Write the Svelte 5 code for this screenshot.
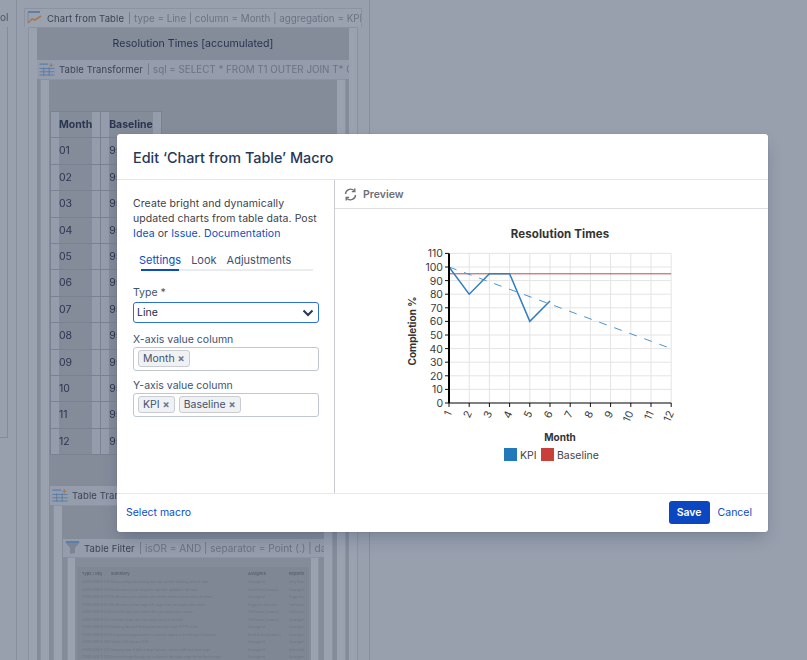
<script>
  const rows = ['01', '02', '03', '04', '05', '06', '07', '08', '09', '10', '11', '12'];

  const issues = [
    ['CONFLUENCE-1241', 'Macro configuration dialog does not save the Opening value of chart', 'Unassigned', 'Greg Harris'],
    ['CONFLUENCE-1242', 'Notifications: email integration has been updated to the latest', 'Cara Perkin [Inactive]', 'Unassigned'],
    ['CONFLUENCE-1237', 'Notifications: user updates with mobile interface optimised to the latest', 'Unassigned', 'Peggy Fox'],
    ['CONFLUENCE-1233', 'Notifications: Create page with pages from new application server', 'Peggy Fox [Inactive]', 'Ted Francis'],
    ['CONFLUENCE-1232', 'Ten fields light with content after you start to use a macro', 'Ted Francis [Inactive]', 'Ted Francis'],
    ['CONFLUENCE-1231', 'Annotate image selection using macros in the table', 'Ted Francis [Inactive]', 'Unassigned'],
    ['CONFLUENCE-1224', 'Updating data and filtering data not work on an HTTPS server', 'Unassigned', 'Unassigned'],
    ['CONFLUENCE-1223', 'Fix layout during parameters comments appear in the left panel of preview', 'Derek Burton [Inactive]', 'Unassigned'],
    ['CONFLUENCE-1218', 'Update CSS format in SVG', 'Unassigned', 'Unassigned'],
    ['CONFLUENCE-1212', 'Mapping input of field of large features, column width and input range', 'Unassigned', 'Unfinished'],
    ['CONFLUENCE-1204', 'Incorrect image through text is shown in the output page the text for the page', 'Unassigned', 'Unassigned']
  ];

  const plotLeft = 49;
  const plotBottom = 183;
  const stepX = 20.2;
  const stepY = 1.36;
  const px = (m) => plotLeft + (m - 1) * stepX;
  const py = (v) => plotBottom - v * stepY;

  const months = [1, 2, 3, 4, 5, 6, 7, 8, 9, 10, 11, 12];
  const ticks = [0, 10, 20, 30, 40, 50, 60, 70, 80, 90, 100, 110];
  const kpi = [100, 80, 95, 95, 60, 75];
  const kpiPoints = kpi.map((v, i) => `${px(i + 1)},${py(v)}`).join(' ');
</script>

<div class="page">
  <div class="side"><span class="side-text">ol</span><div class="side-body"></div></div>
  <div class="column">
    <div class="macro chart-macro">
      <div class="macro-head">
        <svg class="mi" width="16" height="14" viewBox="0 0 16 14">
          <path d="M1 1h12" stroke="#5c7fa8" stroke-width="2" />
          <path d="M1 12l4-4 3 1 6-4" stroke="#a8784e" stroke-width="1.6" fill="none" />
          <path d="M1 1v11" stroke="#7d8899" />
        </svg>
        <b>Chart from Table</b><span>| type = Line | column = Month | aggregation = KPI | tfoot = true</span>
      </div>
      <div class="macro-body">
        <div class="fill">
          <div class="chart-title">Resolution Times [accumulated]</div>
          <div class="macro transformer">
            <div class="macro-head">
              <svg class="mi" width="16" height="13" viewBox="0 0 14 12">
                <path d="M0 1h8M0 5h14M0 8h14M0 11h14M4 4v8M9 4v8" stroke="#5c7fa8" />
                <path d="M11 0v4M9 2h4" stroke="#a8784e" />
              </svg>
              <b>Table Transformer</b><span>| sql = SELECT * FROM T1 OUTER JOIN T* ON T1.'Month' = T*.'Month'</span>
            </div>
            <div class="macro-body">
              <div class="fill table-fill">
                <table>
                  <thead>
                    <tr><th><i>Month</i></th><th><i>Baseline</i></th></tr>
                  </thead>
                  <tbody>
                    {#each rows as r}
                      <tr><td><i>{r}</i></td><td><i>95</i></td></tr>
                    {/each}
                  </tbody>
                </table>
                <div class="macro second">
                  <div class="macro-head">
                    <svg class="mi" width="16" height="13" viewBox="0 0 14 12">
                      <path d="M0 1h8M0 5h14M0 8h14M0 11h14M4 4v8M9 4v8" stroke="#5c7fa8" />
                      <path d="M11 0v4M9 2h4" stroke="#a8784e" />
                    </svg>
                    <b>Table Transformer</b>
                  </div>
                  <div class="macro-body">
                    <div class="fill filter-fill">
                      <div class="macro third">
                        <div class="macro-head">
                          <svg class="mi" width="15" height="14" viewBox="0 0 15 14">
                            <path d="M0 1h15l-5 6v5l-5 1V7z" fill="#7d8592" />
                            <path d="M1 1h13" stroke="#5c7fa8" stroke-width="2" />
                          </svg>
                          <b>Table Filter</b><span>| isOR = AND | separator = Point (.) | datepattern = dd.mm.yy</span>
                        </div>
                        <div class="macro-body">
                          <div class="fill issues-fill">
                            <div class="issues">
                              <div class="issue issue-head"><span>Type / Key</span><span>Summary</span><span>Assignee</span><span>Reporter</span></div>
                              {#each issues as row}
                                <div class="issue">
                                  {#each row as cell}<span>{cell}</span>{/each}
                                </div>
                              {/each}
                            </div>
                          </div>
                        </div>
                      </div>
                    </div>
                  </div>
                </div>
              </div>
            </div>
          </div>
        </div>
      </div>
    </div>
  </div>

  <div class="modal">
    <header class="modal-head">Edit ‘Chart from Table’ Macro</header>
    <div class="modal-main">
      <aside class="panel">
        <p class="intro">
          Create bright and dynamically updated charts from table data. Post
          <a href="#idea">Idea</a> or <a href="#issue">Issue</a>. <a href="#docs">Documentation</a>
        </p>
        <nav class="tabs">
          <span class="tab active">Settings</span>
          <span class="tab">Look</span>
          <span class="tab">Adjustments</span>
        </nav>
        <label class="field-label" for="type">Type *</label>
        <div class="select" id="type">
          <span>Line</span>
          <svg width="12" height="8" viewBox="0 0 12 8"><path d="M1.5 1.5L6 6l4.5-4.5" fill="none" stroke="#253858" stroke-width="2" /></svg>
        </div>
        <div class="field-label">X-axis value column</div>
        <div class="multi">
          <span class="chip">Month <em>×</em></span>
        </div>
        <div class="field-label">Y-axis value column</div>
        <div class="multi">
          <span class="chip">KPI <em>×</em></span>
          <span class="chip">Baseline <em>×</em></span>
        </div>
      </aside>
      <section class="preview">
        <div class="preview-head">
          <svg width="13" height="13" viewBox="0 0 13 13" fill="none" stroke="#6b6f76" stroke-width="1.4">
            <path d="M1.5 6A5 5 0 0 1 10 2.6" />
            <path d="M11.5 7A5 5 0 0 1 3 10.4" />
            <path d="M10.8 0.6v3h-3" />
            <path d="M2.2 12.4v-3h3" />
          </svg>
          <span>Preview</span>
        </div>
        <div class="chart-wrap">
          <svg class="chart" width="300" height="250" viewBox="0 0 300 250">
            <text class="c-title" x="160" y="18" text-anchor="middle">Resolution Times</text>
            {#each ticks as t}
              {#if t > 0}<line x1={plotLeft} x2="271.2" y1={py(t)} y2={py(t)} class="grid" />{/if}
              <text class="tick" x={plotLeft - 6} y={py(t) + 4} text-anchor="end">{t}</text>
              <line x1={plotLeft - 4} x2={plotLeft} y1={py(t)} y2={py(t)} class="axis" />
            {/each}
            {#each months as m}
              {#if m > 1}<line x1={px(m)} x2={px(m)} y1={py(110)} y2={plotBottom} class="grid" />{/if}
              <line x1={px(m)} x2={px(m)} y1={plotBottom} y2={plotBottom + 4} class="axis" />
              <text class="tick" transform="translate({px(m) + 3} {plotBottom + 10}) rotate(-65)" text-anchor="end">{m}</text>
            {/each}
            <line x1={plotLeft} x2={px(12)} y1={py(95)} y2={py(95)} class="baseline" />
            <line x1={plotLeft} x2={px(12)} y1={py(100)} y2={py(40)} class="trend" />
            <polyline points={kpiPoints} class="kpi" />
            <line x1={plotLeft} x2={plotLeft} y1={py(110)} y2={plotBottom} class="axis-y" />
            <line x1={plotLeft} x2={px(12)} y1={plotBottom} y2={plotBottom} class="axis-x" />
            <text class="c-label" transform="translate(16 111) rotate(-90)" text-anchor="middle">Completion %</text>
            <text class="c-label" x="160" y="221" text-anchor="middle">Month</text>
            <rect x="104" y="228" width="13" height="13" fill="#2178bb" />
            <text class="legend" x="120" y="239">KPI</text>
            <rect x="141" y="228" width="13" height="13" fill="#c9403a" />
            <text class="legend" x="157" y="239">Baseline</text>
          </svg>
        </div>
      </section>
    </div>
    <footer class="modal-foot">
      <a href="#select">Select macro</a>
      <div class="actions">
        <button class="save">Save</button>
        <a href="#cancel">Cancel</a>
      </div>
    </footer>
  </div>
</div>

<style>
  :global(body) {
    margin: 0;
    overflow: hidden;
  }

  .page {
    position: relative;
    display: flex;
    width: 807px;
    height: 660px;
    overflow: hidden;
    background: #989fad;
    font-family: Inter, "Liberation Sans", sans-serif;
  }

  .side {
    width: 16px;
    flex: none;
    padding-top: 10px;
    box-sizing: border-box;
    overflow: hidden;
    font-size: 10px;
    color: #4d5666;
    filter: blur(0.4px);
  }

  .side-text {
    display: block;
    height: 17px;
    line-height: 14px;
  }

  .side-body {
    height: 410px;
    border-right: 1px solid #848b99;
    border-bottom: 1px solid #848b99;
    width: 7px;
  }

  .column {
    width: 354px;
    flex: none;
    box-sizing: border-box;
    padding: 8px 7px 0 7px;
    border-left: 1px solid #868d9b;
    border-right: 1px solid #868d9b;
    filter: blur(0.4px);
  }

  .macro-head {
    display: flex;
    align-items: center;
    gap: 4px;
    height: 19px;
    overflow: hidden;
    white-space: nowrap;
    font-size: 9.5px;
    color: #6b7383;
    background: #9aa1af;
    border: 1px solid #8b92a0;
    border-bottom: none;
    box-sizing: border-box;
    padding-left: 2px;
  }

  .macro-head b {
    font-weight: 400;
    color: #3b4454;
    letter-spacing: 0.1px;
  }

  .macro-head span {
    font-size: 9.8px;
  }

  .mi {
    flex: none;
  }

  .macro-body {
    border: 1px solid #8b92a0;
    padding: 0 8px;
    background: #9aa1af;
    margin: 0 3px;
  }

  .fill {
    background: #848b99;
  }

  .chart-macro > .macro-body {
    height: 640px;
    margin: 0 4px;
  }

  .chart-title {
    height: 32px;
    line-height: 32px;
    text-align: center;
    font-size: 10.6px;
    color: #273450;
  }

  .transformer .macro-head {
    background: #959cab;
    border: none;
  }

  .table-fill {
    padding-top: 31px;
    height: 600px;
  }

  table {
    border-collapse: collapse;
    margin-left: 1px;
    font-size: 10.5px;
    color: #2a3650;
  }

  th,
  td {
    border: 1px solid #7a8291;
    padding: 0 8px;
    background: #959cab;
    height: 26.4px;
    text-align: left;
    box-sizing: border-box;
  }

  td:first-child,
  th:first-child {
    width: 50px;
  }

  td:last-child,
  th:last-child {
    width: 61px;
  }

  th i,
  td i {
    display: block;
    font-style: normal;
    background: #848b99;
    height: 100%;
    line-height: 25.4px;
  }

  .second {
    margin: 31px 1px 0 1px;
  }

  .second .macro-head {
    background: #959cab;
    border: none;
  }

  .filter-fill {
    height: 200px;
    padding-top: 33px;
  }

  .third {
    margin-left: 1px;
  }

  .third .macro-head {
    background: #959cab;
    border: none;
    height: 18px;
  }

  .third .macro-head span {
    font-size: 10.1px;
  }

  .third .macro-body {
    padding: 0 7px;
    margin: 0 5px 0 4px;
  }

  .issues-fill {
    height: 180px;
    padding: 9px 2px;
    box-sizing: border-box;
  }

  .issues {
    background: #7f8694;
    padding: 2px 5px;
    height: 110px;
  }

  .issue {
    display: grid;
    grid-template-columns: 29px 137px 41px 1fr;
    height: 7.5px;
    line-height: 7.5px;
    font-size: 3px;
    color: #6f7684;
    white-space: nowrap;
    overflow: hidden;
  }

  .issue span {
    overflow: hidden;
  }

  .issue-head {
    font-size: 4px;
    height: 10px;
    line-height: 10px;
    color: #5a6170;
    font-weight: 600;
  }

  .modal {
    position: absolute;
    left: 117px;
    top: 134px;
    width: 651px;
    height: 398px;
    display: flex;
    flex-direction: column;
    background: #fff;
    border-radius: 3px;
    box-shadow: 0 8px 16px -4px rgba(9, 30, 66, 0.25), 0 0 1px rgba(9, 30, 66, 0.31);
    color: #172b4d;
  }

  .modal-head {
    height: 46px;
    flex: none;
    box-sizing: border-box;
    padding: 15px 16px 0;
    font-size: 14.4px;
    line-height: 18px;
    font-weight: 500;
    color: #253858;
    border-bottom: 1px solid #e6e7eb;
  }

  .modal-main {
    display: flex;
    flex: 1;
    min-height: 0;
  }

  .panel {
    width: 218px;
    flex: none;
    box-sizing: border-box;
    padding: 16px 15px 0 16px;
    border-right: 1px solid #c9cbd0;
    font-size: 11px;
  }

  .intro {
    margin: 0;
    line-height: 15px;
    font-size: 10.5px;
    letter-spacing: 0.08px;
    color: #3a3f49;
  }

  a {
    color: #0b4cc4;
    text-decoration: none;
  }

  .tabs {
    display: flex;
    gap: 10px;
    margin: 12px 6px 0 8px;
    padding: 0 0 1px;
    border-bottom: 2px solid #ebecf0;
    font-size: 11px;
    line-height: 15px;
    color: #42526e;
  }

  .tab {
    position: relative;
  }

  .tab:first-child {
    margin-left: -2px;
  }

  .tab.active {
    color: #0b4cc4;
  }

  .tab.active::after {
    content: '';
    position: absolute;
    left: 2px;
    right: 2px;
    bottom: -3px;
    height: 2px;
    background: #0b4cc4;
  }

  .field-label {
    display: block;
    margin-top: 7px;
    font-size: 10.5px;
    line-height: 15px;
    color: #42526e;
  }

  label.field-label {
    margin-top: 14px;
  }

  .select {
    display: flex;
    align-items: center;
    justify-content: space-between;
    height: 21px;
    margin: 2px 0 9px;
    box-sizing: border-box;
    padding: 0 4px 0 3px;
    border: 1px solid #2b6fd6;
    border-radius: 3px;
    font-size: 10.5px;
    color: #172b4d;
  }

  .multi {
    display: flex;
    gap: 4px;
    height: 24px;
    box-sizing: border-box;
    padding: 2px 4px;
    border: 1px solid #c1c7d0;
    border-radius: 3px;
  }

  .chip {
    display: inline-block;
    height: 17px;
    line-height: 16px;
    box-sizing: border-box;
    padding: 0 4px;
    background: #f0f1f3;
    border: 1px solid #c9ccd2;
    border-radius: 3px;
    font-size: 10.5px;
    color: #42526e;
  }

  .chip em {
    font-style: normal;
    font-weight: 700;
    color: #6b778c;
  }

  .preview {
    flex: 1;
    min-width: 0;
    display: flex;
    flex-direction: column;
  }

  .preview-head {
    display: flex;
    align-items: center;
    gap: 6px;
    height: 29px;
    flex: none;
    box-sizing: border-box;
    padding-left: 9px;
    border-bottom: 1px solid #dddee1;
    font-size: 10.5px;
    font-weight: 600;
    color: #6b6f76;
  }

  .chart-wrap {
    padding: 11px 0 0 65px;
  }

  .chart {
    display: block;
  }

  .c-title {
    font-size: 11.5px;
    font-weight: 700;
    fill: #333;
    letter-spacing: 0.1px;
  }

  .c-label {
    font-size: 10px;
    font-weight: 700;
    fill: #333;
  }

  .tick {
    font-size: 10.5px;
    fill: #3c3c3c;
  }

  .legend {
    font-size: 10.5px;
    fill: #444;
  }

  .grid {
    stroke: #e4e4e4;
    stroke-width: 1;
  }

  .axis {
    stroke: #111;
    stroke-width: 1;
  }

  .axis-y {
    stroke: #000;
    stroke-width: 2;
  }

  .axis-x {
    stroke: #000;
    stroke-width: 1;
  }

  .baseline {
    stroke: #bc4a47;
    stroke-width: 1;
  }

  .trend {
    stroke: #4d93cc;
    stroke-width: 1;
    stroke-dasharray: 8 8;
  }

  .kpi {
    fill: none;
    stroke: #2f7fc0;
    stroke-width: 1.5;
  }

  .modal-foot {
    height: 39px;
    flex: none;
    box-sizing: border-box;
    display: flex;
    align-items: center;
    justify-content: space-between;
    padding: 0 16px 2px 9px;
    border-top: 1px solid #e6e7eb;
    font-size: 10.5px;
  }

  .actions {
    display: flex;
    align-items: center;
    gap: 8px;
  }

  .save {
    width: 41px;
    height: 23px;
    padding: 0;
    border: none;
    border-radius: 3px;
    background: #0b47c0;
    color: #fff;
    font: 600 10.5px Inter, "Liberation Sans", sans-serif;
  }
</style>
